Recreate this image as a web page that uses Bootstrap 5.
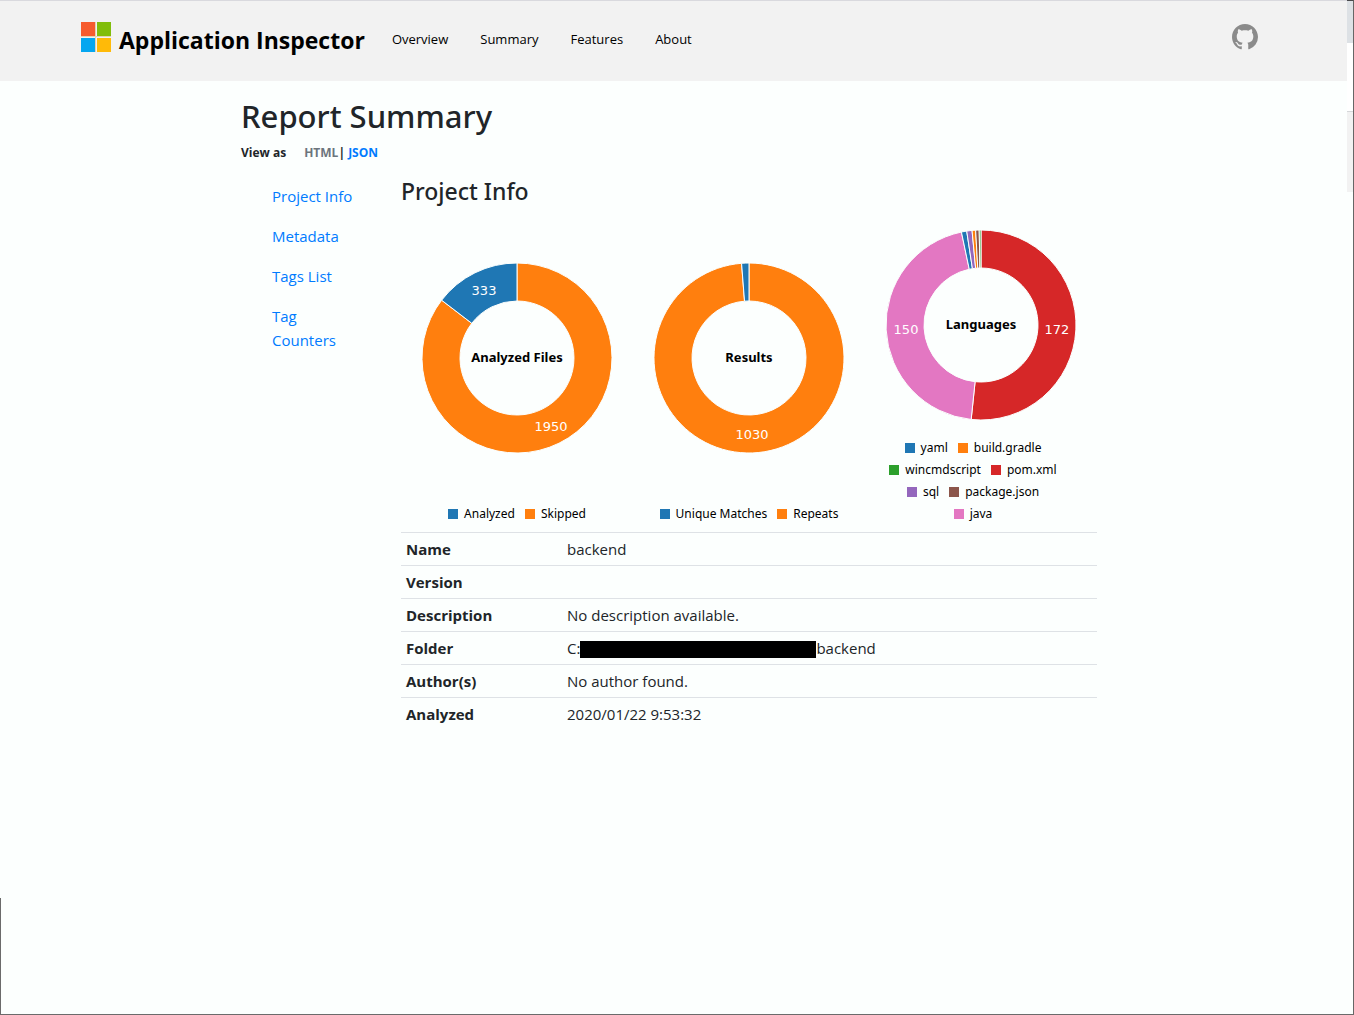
<!DOCTYPE html>
<html lang="en">
<head>
<meta charset="utf-8">
<meta name="viewport" content="width=device-width, initial-scale=1">
<title>Application Inspector - Report Summary</title>
<link href="https://cdn.jsdelivr.net/npm/bootstrap@5.3.0/dist/css/bootstrap.min.css" rel="stylesheet">
<style>
  body { font-family: "Open Sans", "Noto Sans", sans-serif; font-size: 15px; line-height: 24px; color: #212529; background: #fcfffe; }
  a { color: #007bff; text-decoration: none; }
  .shell { min-height: 100vh; border-bottom: 1px solid #6b6b6b; }
  .left-edge { left: 0; bottom: 0; width: 1px; height: 116px; background: #6b6b6b; }
  .rail { width: 7px; border-right: 1px solid #666; border-top: 1px solid #4a4a4c; }
  .rail-a { height: 42px; background: #dde1e5; }
  .rail-b { height: 68px; background: #fff; }
  .rail-c { height: 81px; background: #f2f2f2; border-top: 1px solid #d5d7d9; }
  .topbar { height: 81px; background: #f2f2f2; border-top: 1px solid #d9d9de; padding: 21px 89px 0 81px; }
  .topbar .navbar-brand { font-size: 23px; font-weight: 700; line-height: 36px; color: #000; margin: 0 27px 0 0; padding: 0; gap: 8px; }
  .topbar .nav { gap: 32px; padding-top: 7px; }
  .topbar .nav-link { font-size: 13px; line-height: 20px; color: #000; padding: 0; }
  .gh-link { padding-top: 2px; }
  .report { width: 100%; max-width: 865px; padding-top: 15px; }
  h1, h2 { font-family: "Noto Sans", "Open Sans", sans-serif; font-weight: 500; }
  h1 { font-size: 31px; line-height: 40px; margin: 0 0 8px; }
  h2 { font-size: 23px; line-height: 30px; margin: 0; }
  .view-as { font-size: 12px; line-height: 18px; font-weight: 700; margin: 0 0 14px; }
  .view-as .view-label { margin-right: 18px; }
  .side { width: 160px; padding: 0 40px 0 31px; }
  .side .nav-link { padding: 8px 0; color: #007bff; }
  .content { padding-right: 9px; min-width: 0; }
  .charts { min-height: 326px; padding-top: 7px; }
  .chart-box { flex: 1 1 0; padding-bottom: 7px; }
  .chart-box svg text { font-family: "DejaVu Sans", sans-serif; font-size: 13px; fill: #fff; text-anchor: middle; }
  .chart-box svg .ring-title { font-family: "Noto Sans", sans-serif; font-weight: 700; fill: #000; }
  .ring path { stroke: #fcfffe; stroke-width: 1; }
  .keys { font-family: "Noto Sans", sans-serif; font-size: 12px; line-height: 22px; color: #000; }
  .keys div { gap: 10px; }
  .keys span { display: flex; align-items: center; gap: 6px; }
  .keys i { width: 10px; height: 10px; }
  .c-blue { background: #1f77b4; } .c-orange { background: #ff7f0e; } .c-green { background: #2ca02c; }
  .c-red { background: #d62728; } .c-purple { background: #9467bd; } .c-brown { background: #8c564b; } .c-pink { background: #e377c2; }
  .facts { margin: 0; --bs-table-bg: transparent; --bs-table-color: #212529; }
  .facts th, .facts td { padding: 4px 5px; border-width: 1px 0 0; border-color: #dee2e6; }
  .facts th { width: 161px; }
  .redacted { width: 236px; height: 17px; background: #000; vertical-align: -4px; }
</style>
<script src="https://cdn.jsdelivr.net/npm/bootstrap@5.3.0/dist/js/bootstrap.bundle.min.js"></script>
</head>
<body>
<div class="shell d-flex position-relative">
  <div class="flex-grow-1">
    <header class="topbar navbar align-items-start flex-nowrap">
      <a class="navbar-brand d-flex" href="#">
        <svg width="30" height="30" viewBox="0 0 30 30" aria-hidden="true"><path fill="#f65b2e" d="M0 0h14v14H0z"/><path fill="#81bd0b" d="M16 0h14v14H16z"/><path fill="#05a6f0" d="M0 16h14v14H0z"/><path fill="#ffba08" d="M16 16h14v14H16z"/><path stroke="#e4d3b0" stroke-width="1" d="M14.500 0v30M0 14.500h30"/></svg>
        <span>Application Inspector</span>
      </a>
      <nav class="nav flex-grow-1">
        <a class="nav-link" href="#">Overview</a><a class="nav-link" href="#">Summary</a><a class="nav-link" href="#">Features</a><a class="nav-link" href="#">About</a>
      </nav>
      <a class="gh-link" href="#" aria-label="GitHub"><svg class="d-block" width="26" height="26" viewBox="0 0 16 16" fill="#8b8b8b"><path d="M8 0C3.58 0 0 3.58 0 8c0 3.54 2.29 6.53 5.47 7.59.4.07.55-.17.55-.38 0-.19-.01-.82-.01-1.49-2.01.37-2.53-.49-2.69-.94-.09-.23-.48-.94-.82-1.13-.28-.15-.68-.52-.01-.53.63-.01 1.08.58 1.23.82.72 1.21 1.87.87 2.33.66.07-.52.28-.87.51-1.07-1.78-.2-3.64-.89-3.64-3.95 0-.87.31-1.59.82-2.15-.08-.2-.36-1.02.08-2.12 0 0 .67-.21 2.2.82.64-.18 1.32-.27 2-.27s1.36.09 2 .27c1.53-1.04 2.2-.82 2.2-.82.44 1.1.16 1.92.08 2.12.51.56.82 1.27.82 2.15 0 3.07-1.87 3.75-3.65 3.95.29.25.54.73.54 1.48 0 1.07-.01 1.93-.01 2.2 0 .21.15.46.55.38A8.01 8.01 0 0 0 16 8c0-4.42-3.58-8-8-8z"/></svg></a>
    </header>
    <main class="report mx-auto">
      <h1>Report Summary</h1>
      <p class="view-as d-flex"><span class="view-label">View as</span><span class="text-secondary">HTML</span>|&nbsp;<a href="#">JSON</a></p>
      <div class="d-flex">
        <nav class="side nav flex-column flex-nowrap flex-shrink-0">
          <a class="nav-link" href="#">Project Info</a><a class="nav-link" href="#">Metadata</a><a class="nav-link" href="#">Tags List</a><a class="nav-link" href="#">Tag Counters</a>
        </nav>
        <section class="content flex-grow-1">
          <h2>Project Info</h2>
          <div class="charts d-flex">
            <div class="chart-box d-flex flex-column">
              <div class="flex-grow-1 d-flex align-items-center justify-content-center">
                <svg width="190" height="190" viewBox="-95 -95 190 190"><g class="ring" data-slices="1950:#ff7f0e,333:#1f77b4"></g><text class="ring-title" y="4">Analyzed Files</text><text x="-33" y="-63">333</text><text x="34" y="73">1950</text></svg>
              </div>
              <div class="keys"><div class="d-flex justify-content-center"><span><i class="c-blue"></i>Analyzed</span><span><i class="c-orange"></i>Skipped</span></div></div>
            </div>
            <div class="chart-box d-flex flex-column">
              <div class="flex-grow-1 d-flex align-items-center justify-content-center">
                <svg width="190" height="190" viewBox="-95 -95 190 190"><g class="ring" data-slices="1030:#ff7f0e,13:#1f77b4"></g><text class="ring-title" y="4">Results</text><text x="3" y="81">1030</text></svg>
              </div>
              <div class="keys"><div class="d-flex justify-content-center"><span><i class="c-blue"></i>Unique Matches</span><span><i class="c-orange"></i>Repeats</span></div></div>
            </div>
            <div class="chart-box d-flex flex-column">
              <div class="flex-grow-1 d-flex align-items-center justify-content-center">
                <svg width="190" height="190" viewBox="-95 -95 190 190"><g class="ring" data-slices="172:#d62728,150:#e377c2,3:#1f77b4,3:#9467bd,2:#ff7f0e,2:#8c564b,1:#2ca02c"></g><text class="ring-title" y="4">Languages</text><text x="-75" y="9">150</text><text x="76" y="9">172</text></svg>
              </div>
              <div class="keys pe-3">
                <div class="d-flex justify-content-center"><span><i class="c-blue"></i>yaml</span><span><i class="c-orange"></i>build.gradle</span></div>
                <div class="d-flex justify-content-center"><span><i class="c-green"></i>wincmdscript</span><span><i class="c-red"></i>pom.xml</span></div>
                <div class="d-flex justify-content-center"><span><i class="c-purple"></i>sql</span><span><i class="c-brown"></i>package.json</span></div>
                <div class="d-flex justify-content-center"><span><i class="c-pink"></i>java</span></div>
              </div>
            </div>
          </div>
          <table class="table facts">
            <tbody>
              <tr><th scope="row">Name</th><td>backend</td></tr>
              <tr><th scope="row">Version</th><td></td></tr>
              <tr><th scope="row">Description</th><td>No description available.</td></tr>
              <tr><th scope="row">Folder</th><td>C:<span class="redacted d-inline-block"></span>backend</td></tr>
              <tr><th scope="row">Author(s)</th><td>No author found.</td></tr>
              <tr><th scope="row">Analyzed</th><td>2020/01/22 9:53:32</td></tr>
            </tbody>
          </table>
        </section>
      </div>
    </main>
  </div>
  <div class="rail flex-shrink-0"><div class="rail-a"></div><div class="rail-b"></div><div class="rail-c"></div></div>
  <div class="left-edge position-absolute"></div>
</div>
<script>
  // Build each doughnut clockwise from twelve o'clock.
  document.querySelectorAll('.ring').forEach(function (ring) {
    var slices = ring.dataset.slices.split(',').map(function (s) { return s.split(':'); });
    var total = slices.reduce(function (sum, s) { return sum + Number(s[0]); }, 0);
    var outer = 95, inner = 57, start = 0;
    function point(r, t) { var a = t / total * 2 * Math.PI; return (r * Math.sin(a)).toFixed(3) + ' ' + (-r * Math.cos(a)).toFixed(3); }
    slices.forEach(function (s) {
      var end = start + Number(s[0]), large = s[0] / total > 0.5 ? 1 : 0;
      var path = document.createElementNS('http://www.w3.org/2000/svg', 'path');
      path.setAttribute('fill', s[1]);
      path.setAttribute('d', 'M' + point(outer, start) + 'A' + outer + ' ' + outer + ' 0 ' + large + ' 1 ' + point(outer, end) +
        'L' + point(inner, end) + 'A' + inner + ' ' + inner + ' 0 ' + large + ' 0 ' + point(inner, start) + 'Z');
      ring.appendChild(path);
      start = end;
    });
  });
</script>
</body>
</html>
